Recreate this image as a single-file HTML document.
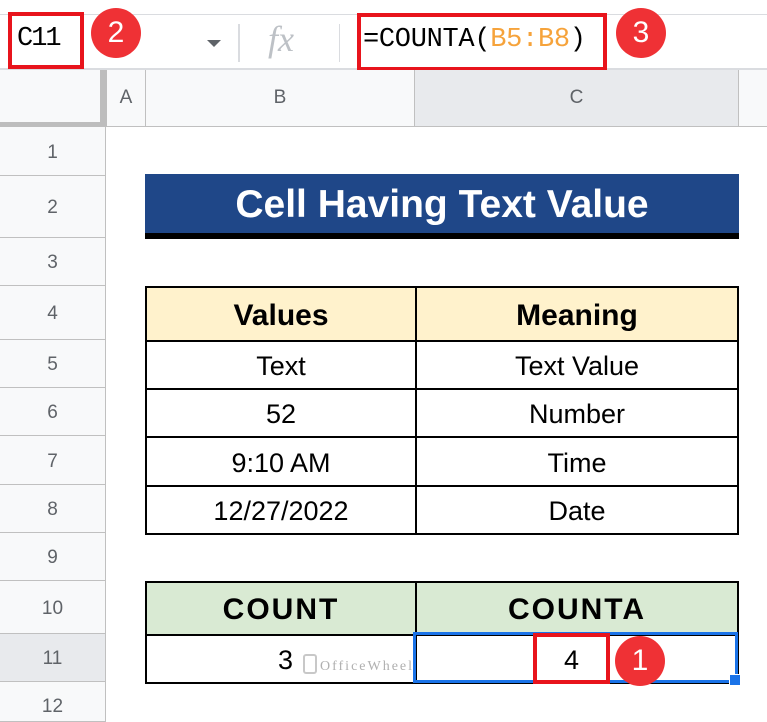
<!DOCTYPE html>
<html><head><meta charset="utf-8"><style>
*{box-sizing:border-box;margin:0;padding:0}
body{width:767px;height:708px;overflow:hidden;background:#fff;font-family:"Liberation Sans",Arial,sans-serif;position:relative}
.a{position:absolute}
.rh{position:absolute;left:0;width:106px;background:#f8f9fa;border-bottom:1px solid #c0c0c0;border-right:1px solid #c0c0c0;color:#5f6368;font-size:19px;display:flex;align-items:center;justify-content:center;padding-top:3px}
.ch{position:absolute;top:70px;height:57px;background:#f8f9fa;border-right:1px solid #c0c0c0;border-bottom:1px solid #c0c0c0;color:#5f6368;font-size:19px;display:flex;align-items:center;justify-content:center}
.c{position:absolute;display:flex;align-items:center;justify-content:center;font-size:27px;color:#000;border:2px solid #000;padding-top:3px}
.b{font-weight:bold;font-size:30px}
.circ{position:absolute;width:50px;height:50px;border-radius:50%;background:#ef3135;color:#fff;font-size:30px;display:flex;align-items:center;justify-content:center}
.red{position:absolute;border:4px solid #e8141c}
</style></head><body>
<div class="a" style="left:0;top:14px;width:767px;height:1px;background:#dadce0"></div>
<div class="a" style="left:0;top:68px;width:767px;height:2px;background:#dadce0"></div>
<div class="a" style="left:17px;top:24px;font-size:27px;color:#000;font-family:'Liberation Mono',monospace;letter-spacing:-2px">C11</div>
<div class="a" style="left:207px;top:40px;width:0;height:0;border-left:7px solid transparent;border-right:7px solid transparent;border-top:7px solid #5f6368"></div>
<div class="a" style="left:238px;top:24px;width:2px;height:38px;background:#dadce0"></div>
<div class="a" style="left:268px;top:18px;font-size:36px;font-style:italic;color:#bdc1c6;font-family:'Liberation Serif',serif">fx</div>
<div class="a" style="left:339px;top:24px;width:1px;height:38px;background:#dadce0"></div>
<div class="a" style="left:363px;top:25px;font-size:27px;font-family:'Liberation Mono',monospace;color:#000;letter-spacing:-0.3px">=COUNTA(<span style="color:#f6a33b">B5:B8</span>)</div>
<div class="red" style="left:8px;top:12px;width:76px;height:57px"></div>
<div class="red" style="left:357px;top:13px;width:250px;height:58px"></div>
<div class="circ" style="left:91px;top:8px">2</div>
<div class="circ" style="left:616px;top:8px">3</div>

<div class="a" style="left:0;top:70px;width:107px;height:57px;background:#f8f9fa;border-right:7px solid #bdbdbd;border-bottom:5px solid #bdbdbd"></div>
<div class="ch" style="left:107px;width:39px">A</div>
<div class="ch" style="left:146px;width:269px">B</div>
<div class="ch" style="left:415px;width:324px;background:#e8eaed">C</div>
<div class="ch" style="left:739px;width:40px"></div>

<div class="rh" style="top:127px;height:49px">1</div>
<div class="rh" style="top:176px;height:62px">2</div>
<div class="rh" style="top:238px;height:48px">3</div>
<div class="rh" style="top:286px;height:54px">4</div>
<div class="rh" style="top:340px;height:48px">5</div>
<div class="rh" style="top:388px;height:48px">6</div>
<div class="rh" style="top:436px;height:49px">7</div>
<div class="rh" style="top:485px;height:48px">8</div>
<div class="rh" style="top:533px;height:48px">9</div>
<div class="rh" style="top:581px;height:53px">10</div>
<div class="rh" style="top:634px;height:48px;background:#e8eaed">11</div>
<div class="rh" style="top:682px;height:40px;align-items:flex-start;padding-top:14px">12</div>

<div class="a" style="left:145px;top:174px;width:594px;height:65px;background:#1f4788;border-bottom:6px solid #000;color:#fff;font-weight:bold;font-size:39px;display:flex;align-items:center;justify-content:center;padding-top:3px">Cell Having Text Value</div>

<div class="c b" style="left:145px;top:286px;width:272px;height:56px;background:#fff2cc">Values</div>
<div class="c b" style="left:415px;top:286px;width:324px;height:56px;background:#fff2cc">Meaning</div>
<div class="c" style="left:145px;top:340px;width:272px;height:50px">Text</div>
<div class="c" style="left:415px;top:340px;width:324px;height:50px">Text Value</div>
<div class="c" style="left:145px;top:388px;width:272px;height:50px">52</div>
<div class="c" style="left:415px;top:388px;width:324px;height:50px">Number</div>
<div class="c" style="left:145px;top:436px;width:272px;height:51px">9:10 AM</div>
<div class="c" style="left:415px;top:436px;width:324px;height:51px">Time</div>
<div class="c" style="left:145px;top:485px;width:272px;height:50px">12/27/2022</div>
<div class="c" style="left:415px;top:485px;width:324px;height:50px">Date</div>

<div class="c b" style="left:145px;top:581px;width:272px;height:55px;background:#d9ead3;letter-spacing:2px">COUNT</div>
<div class="c b" style="left:415px;top:581px;width:324px;height:55px;background:#d9ead3;letter-spacing:2px">COUNTA</div>
<div class="c" style="left:145px;top:634px;width:272px;height:50px;justify-content:flex-end;padding-right:122px">3</div>
<div class="c" style="left:415px;top:634px;width:324px;height:50px"></div>
<div class="a" style="left:413px;top:632px;width:325px;height:51px;border:3px solid #1a73e8"></div>
<div class="a" style="left:729px;top:674px;width:12px;height:12px;background:#1a73e8;border:1px solid #fff"></div>
<div class="a" style="left:320px;top:659px;font-size:14px;color:#b0b0b0;letter-spacing:2px;font-family:'Liberation Serif',serif">OfficeWheel</div>
<div class="a" style="left:303px;top:654px;width:14px;height:20px;border:2px solid #c8c8c8;border-radius:3px"></div>
<div class="red" style="left:533px;top:633px;width:77px;height:51px;display:flex;align-items:center;justify-content:center;font-size:27px;background:#fff;padding-top:3px">4</div>
<div class="circ" style="left:615px;top:636px">1</div>
</body></html>
